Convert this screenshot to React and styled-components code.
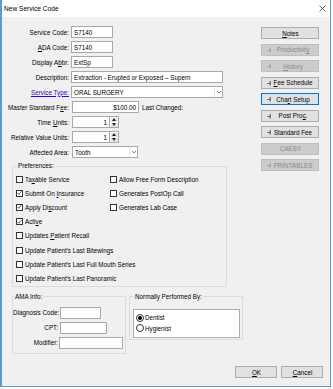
import React from 'react'
import styled, { createGlobalStyle } from 'styled-components'

const Global = createGlobalStyle`
    html, body {
        margin: 0;
        padding: 0;
        background: #ffffff;
    }
    body {
        font-family: "Liberation Sans", Arial, sans-serif;
        font-size: 6.3px;
        color: #000;
    }
    * { box-sizing: border-box; }
`;

const Window = styled.div`
    width: 331px;
    height: 387px;
    display: flex;
    flex-direction: column;
    background: #f0f0f0;
    border: 1px solid #5b9bd5;
    border-left-width: 2px;
    border-top: none;
`;

const TitleBar = styled.div`
    height: 17px;
    background: #ffffff;
    display: flex;
    align-items: center;
    justify-content: space-between;
    padding: 0 4px 0 2px;
    font-size: 6.6px;
`;

const Body = styled.div`
    flex: 1;
    display: flex;
    flex-direction: column;
    padding: 9px 7px 8px 0;
`;

const Main = styled.div`
    display: flex;
`;

const LeftCol = styled.div`
    width: 242px;
    display: flex;
    flex-direction: column;
`;

const ButtonCol = styled.div`
    margin-left: 17px;
    padding-top: 1px;
    display: flex;
    flex-direction: column;
    gap: 4.5px;
`;

const FieldRow = styled.div`
    display: grid;
    grid-template-columns: ${p => p.$label || 67}px auto;
    column-gap: ${p => p.$gap || 2}px;
    align-items: center;
    height: 12px;
    margin-bottom: 3px;
`;

const Label = styled.span`
    text-align: right;
    white-space: nowrap;
    color: ${p => (p.$link ? '#1a0dcc' : '#000')};
    text-decoration: ${p => (p.$link ? 'underline' : 'none')};
`;

const Inline = styled.div`
    display: flex;
    align-items: center;
    gap: 3px;
    margin-left: ${p => p.$shift || 0}px;
`;

const TextBox = styled.div`
    width: ${p => p.$w}px;
    height: 12px;
    flex-shrink: 0;
    background: #fff;
    border: 1px solid #a9a9a9;
    display: flex;
    align-items: center;
    justify-content: ${p => (p.$right ? 'flex-end' : 'flex-start')};
    padding: 0 2px;
    white-space: nowrap;
    overflow: hidden;
`;

const Select = styled(TextBox)`
    justify-content: space-between;
    padding-right: 0;
`;

const DropArrow = styled.span`
    width: 8px;
    height: 10px;
    display: flex;
    align-items: center;
    justify-content: center;
    border-left: 1px solid #e3e3e3;
`;

const SpinWrap = styled.div`
    display: flex;
`;

const Spinner = styled.div`
    width: 9px;
    height: 12px;
    border: 1px solid #a9a9a9;
    border-left: none;
    background: #fff;
    display: flex;
    flex-direction: column;
`;

const SpinHalf = styled.div`
    flex: 1;
    display: flex;
    align-items: center;
    justify-content: center;
    background: #e6e6e6;
    margin: 0.5px;
`;

const Group = styled.fieldset`
    margin: ${p => p.$mt || 0}px 0 0 ${p => p.$ml || 0}px;
    width: ${p => p.$w}px;
    border: 1px solid #dcdcdc;
    padding: ${p => p.$pad || '3px 3px 0 3px'};
    min-width: 0;
`;

const Legend = styled.legend`
    padding: 0 1px;
    margin-left: 1px;
    line-height: 8px;
    font-size: 6.3px;
`;

const PrefGrid = styled.div`
    display: flex;
`;

const PrefCol = styled.div`
    width: ${p => p.$w || 'auto'};
    flex-shrink: 0;
    display: flex;
    flex-direction: column;
`;

const CheckRow = styled.label`
    height: 14.2px;
    display: flex;
    align-items: center;
    gap: 2px;
    white-space: nowrap;
`;

const Box = styled.span`
    width: 7px;
    height: 7px;
    flex-shrink: 0;
    border: 1px solid #333;
    background: #fff;
    display: flex;
    align-items: center;
    justify-content: center;
`;

const BottomRow = styled.div`
    display: flex;
    gap: 3px;
    margin-left: 10px;
    margin-top: 6px;
    align-items: flex-start;
`;

const RadioBox = styled.div`
    background: #fff;
    border: 1px solid #adadad;
    height: 29px;
    padding: 3px 2px;
    display: flex;
    flex-direction: column;
    justify-content: space-around;
`;

const RadioRow = styled.label`
    display: flex;
    align-items: center;
    gap: 1px;
`;

const Circle = styled.span`
    width: 8px;
    height: 8px;
    flex-shrink: 0;
    border-radius: 50%;
    border: 1px solid #333;
    background: #fff;
    display: flex;
    align-items: center;
    justify-content: center;
    &::after {
        content: '';
        width: 4px;
        height: 4px;
        border-radius: 50%;
        background: ${p => (p.$on ? '#000' : 'transparent')};
    }
`;

const Btn = styled.div`
    width: ${p => p.$w || 58}px;
    height: 12px;
    background: ${p => (p.$disabled ? '#cccccc' : '#e1e1e1')};
    border: 1px solid ${p => (p.$focus ? '#0078d7' : p.$disabled ? '#bfbfbf' : '#adadad')};
    box-shadow: ${p => (p.$focus ? 'inset 0 0 0 1px #cfe3f7' : 'none')};
    color: ${p => (p.$disabled ? '#8a8a8a' : '#000')};
    display: flex;
    align-items: center;
    padding: 0 4px 0 5px;
    white-space: nowrap;
`;

const BtnText = styled.span`
    flex: 1;
    text-align: center;
`;

const Footer = styled.div`
    margin-top: auto;
    display: flex;
    justify-content: flex-end;
    gap: 4px;
`;

function Tick() {
    return (
        <svg width="6" height="6" viewBox="0 0 6 6">
            <path d="M0.8 3 L2.3 4.6 L5.2 0.9" stroke="#222" strokeWidth="0.9" fill="none" />
        </svg>
    );
}

function BtnIcon({ color }) {
    return (
        <svg width="5" height="6" viewBox="0 0 5 6">
            <path d="M0.5 3.5 H2.6 M3.2 1 V5.5" stroke={color} strokeWidth="0.8" fill="none" />
        </svg>
    );
}

function Check({ on, children }) {
    return (
        <CheckRow>
            <Box>{on && <Tick />}</Box>
            <span>{children}</span>
        </CheckRow>
    );
}

function Chevron() {
    return (
        <svg width="6" height="4" viewBox="0 0 6 4">
            <path d="M1 1 L3 3 L5 1" stroke="#555" strokeWidth="0.7" fill="none" />
        </svg>
    );
}

function Spin({ w, value }) {
    return (
        <SpinWrap>
            <TextBox $w={w} $right>{value}</TextBox>
            <Spinner>
                <SpinHalf>
                    <svg width="4" height="3" viewBox="0 0 4 3"><path d="M0 3 L2 0 L4 3 Z" fill="#222" /></svg>
                </SpinHalf>
                <SpinHalf>
                    <svg width="4" height="3" viewBox="0 0 4 3"><path d="M0 0 L2 3 L4 0 Z" fill="#222" /></svg>
                </SpinHalf>
            </Spinner>
        </SpinWrap>
    );
}

const buttons = [
    { text: <><u>N</u>otes</> },
    { text: <>Productivit<u>y</u></>, icon: true, disabled: true },
    { text: <><u>H</u>istory</>, icon: true, disabled: true },
    { text: <><u>F</u>ee Schedule</>, icon: true },
    { text: <>Cha<u>r</u>t Setup</>, icon: true, focus: true },
    { text: <>Post Pro<u>c</u>.</>, icon: true },
    { text: 'Standard Fee', icon: true },
    { text: 'CAESY', disabled: true },
    { text: 'PRINTABLES', icon: true, disabled: true },
];

function App() {
    return (
        <>
            <Global />
            <Window>
                <TitleBar>
                    <span>New Service Code</span>
                    <svg width="7" height="7" viewBox="0 0 7 7">
                        <path d="M0.5 0.5 L6.5 6.5 M6.5 0.5 L0.5 6.5" stroke="#222" strokeWidth="0.7" />
                    </svg>
                </TitleBar>
                <Body>
                    <Main>
                        <LeftCol>
                            <FieldRow>
                                <Label>Service Code:</Label>
                                <TextBox $w={42}>S7140</TextBox>
                            </FieldRow>
                            <FieldRow>
                                <Label><u>A</u>DA Code:</Label>
                                <TextBox $w={42}>S7140</TextBox>
                            </FieldRow>
                            <FieldRow>
                                <Label>Display A<u>b</u>br:</Label>
                                <TextBox $w={42}>ExtSp</TextBox>
                            </FieldRow>
                            <FieldRow>
                                <Label>Description:</Label>
                                <TextBox $w={152}>Extraction - Erupted or Exposed – Supern</TextBox>
                            </FieldRow>
                            <FieldRow>
                                <Label $link>Service Type:</Label>
                                <Select $w={152}>
                                    <span>ORAL SURGERY</span>
                                    <DropArrow><Chevron /></DropArrow>
                                </Select>
                            </FieldRow>
                            <FieldRow>
                                <Label>Master Standard F<u>e</u>e:</Label>
                                <Inline $shift={1}>
                                    <TextBox $w={67} $right>$100.00</TextBox>
                                    <span>Last Changed:</span>
                                </Inline>
                            </FieldRow>
                            <FieldRow>
                                <Label>Time <u>U</u>nits:</Label>
                                <Inline $shift={1}><Spin w={38} value="1" /></Inline>
                            </FieldRow>
                            <FieldRow>
                                <Label>Relative Value Units:</Label>
                                <Inline $shift={1}><Spin w={38} value="1" /></Inline>
                            </FieldRow>
                            <FieldRow>
                                <Label>Affected Area:</Label>
                                <Inline $shift={1}>
                                    <Select $w={66}>
                                        <span>Tooth</span>
                                        <DropArrow><Chevron /></DropArrow>
                                    </Select>
                                </Inline>
                            </FieldRow>

                            <Group $w={215} $ml={10} $mt={1} $pad="2px 3px 0 3px">
                                <Legend>Preferences:</Legend>
                                <PrefGrid>
                                    <PrefCol $w="94px">
                                        <Check>Ta<u>x</u>able Service</Check>
                                        <Check on>Submit On <u>I</u>nsurance</Check>
                                        <Check on>Apply Di<u>s</u>count</Check>
                                        <Check on>Acti<u>v</u>e</Check>
                                        <Check>Updates <u>P</u>atient Recall</Check>
                                        <Check>Update Patient's Last Bitewings</Check>
                                        <Check>Update Patient's Last Full Mouth Series</Check>
                                        <Check>Update Patient's Last Panoramic</Check>
                                    </PrefCol>
                                    <PrefCol>
                                        <Check>Allow Free Form Description</Check>
                                        <Check>Generates PostOp Call</Check>
                                        <Check>Generates Lab Case</Check>
                                    </PrefCol>
                                </PrefGrid>
                            </Group>

                            <BottomRow>
                                <Group $w={114} $pad="6px 2px 1px 0">
                                    <Legend>AMA Info:</Legend>
                                    <FieldRow $label={45} $gap={2}>
                                        <Label>Diagnosis Code:</Label>
                                        <TextBox $w={41} />
                                    </FieldRow>
                                    <FieldRow $label={45} $gap={2}>
                                        <Label>CPT:</Label>
                                        <TextBox $w={47} />
                                    </FieldRow>
                                    <FieldRow $label={45} $gap={1}>
                                        <Label>Modifier:</Label>
                                        <TextBox $w={64} />
                                    </FieldRow>
                                </Group>
                                <Group $w={114} $pad="8px 2px 1px 3px">
                                    <Legend>Normally Performed By:</Legend>
                                    <RadioBox>
                                        <RadioRow><Circle $on />Dentist</RadioRow>
                                        <RadioRow><Circle />Hygienist</RadioRow>
                                    </RadioBox>
                                </Group>
                            </BottomRow>
                        </LeftCol>

                        <ButtonCol>
                            {buttons.map((b, i) => (
                                <Btn key={i} $disabled={b.disabled} $focus={b.focus}>
                                    {b.icon && <BtnIcon color={b.disabled ? '#8a8a8a' : '#222'} />}
                                    <BtnText>{b.text}</BtnText>
                                </Btn>
                            ))}
                        </ButtonCol>
                    </Main>
                    <Footer>
                        <Btn $w={42}><BtnText><u>O</u>K</BtnText></Btn>
                        <Btn $w={42}><BtnText><u>C</u>ancel</BtnText></Btn>
                    </Footer>
                </Body>
            </Window>
        </>
    );
}

export default App;
